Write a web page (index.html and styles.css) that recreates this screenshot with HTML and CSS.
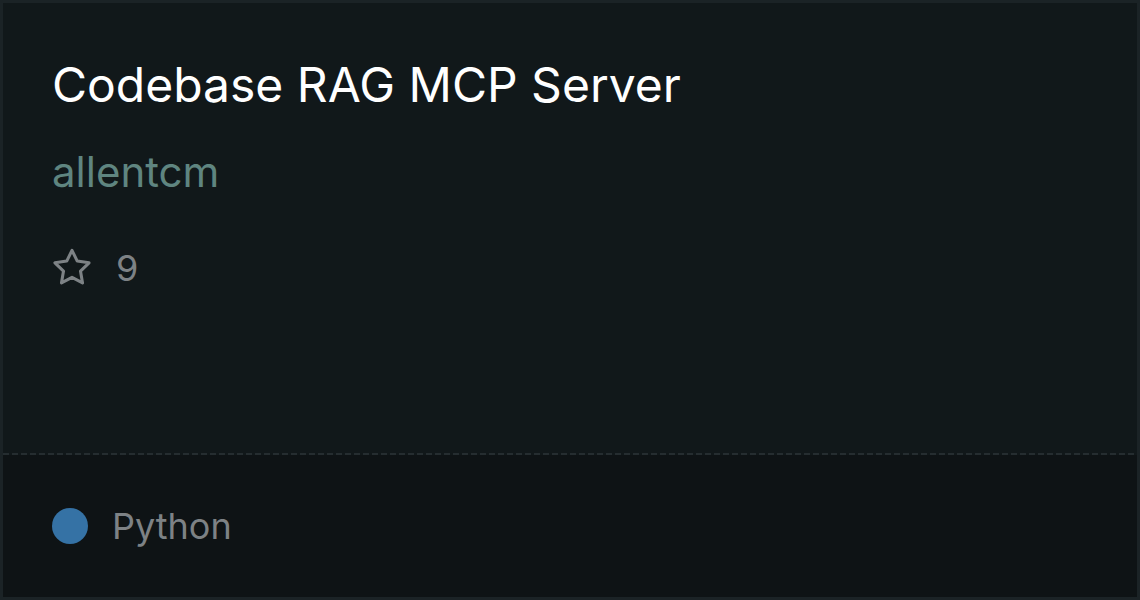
FILE: index.html
```html
<!DOCTYPE html>
<html lang="en">
<head>
    <meta charset="UTF-8">
    <title>Codebase RAG MCP Server</title>
    <link rel="stylesheet" href="styles.css">
</head>
<body>
    <div class="card">
        <div class="card-body">
            <div class="title">Codebase RAG MCP Server</div>
            <div class="owner">allentcm</div>
            <div class="stars">
                <svg class="star-icon" viewBox="0 0 24 24" width="46" height="46">
                    <path d="M12 2.8l2.75 5.6 6.15.9-4.45 4.35 1.05 6.13L12 16.9l-5.5 2.88 1.05-6.13L3.1 9.3l6.15-.9z"
                          fill="none" stroke="currentColor" stroke-width="1.6" stroke-linejoin="round"/>
                </svg>
                <span class="count">9</span>
            </div>
        </div>
        <div class="divider"></div>
        <div class="card-footer">
            <span class="lang-dot"></span>
            <span class="lang">Python</span>
        </div>
    </div>
</body>
</html>
```

FILE: styles.css
```css
* {
    margin: 0;
    padding: 0;
    box-sizing: border-box;
}

body {
    width: 1140px;
    height: 600px;
    background: #1b2326;
    font-family: 'Inter', sans-serif;
}

.card {
    height: 600px;
    border: 3px solid #1b2326;
    display: flex;
    flex-direction: column;
}

.card-body {
    flex: 1;
    background: #11181a;
    padding: 54px 49px 0;
}

.divider {
    height: 2px;
    background: #11181a repeating-linear-gradient(90deg, #252d30 0 6px, transparent 6px 9px);
}

.title {
    font-size: 48px;
    line-height: 56px;
    color: #ffffff;
}

.owner {
    margin-top: 34px;
    font-size: 42px;
    line-height: 50px;
    color: #5f8580;
}

.stars {
    margin-top: 48px;
    display: flex;
    align-items: center;
    gap: 21px;
    color: #7d8285;
}

.star-icon {
    display: block;
    margin-left: -3px;
}

.count {
    font-size: 36px;
    line-height: 44px;
}

.card-footer {
    height: 142px;
    background: #0e1315;
    padding: 0 49px;
    display: flex;
    align-items: center;
    gap: 24px;
}

.lang-dot {
    width: 36px;
    height: 36px;
    border-radius: 50%;
    background: #3572a5;
}

.lang {
    font-size: 36px;
    color: #7d8285;
}
```
